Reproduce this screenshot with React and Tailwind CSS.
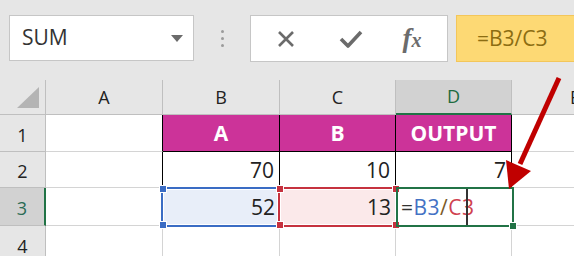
import React from "react";

const F = { fontFamily: '"Open Sans", "Noto Sans", sans-serif' };

function Corners({ color, skip = [] }) {
  const pos = {
    tl: "left-[-4px] top-[-4px]",
    tr: "right-[-4px] top-[-4px]",
    bl: "left-[-4px] bottom-[-4px]",
    br: "right-[-4px] bottom-[-4px]",
  };
  return (
    <>
      {["tl", "tr", "bl", "br"]
        .filter((k) => !skip.includes(k))
        .map((k) => (
          <div key={k} className={`absolute w-[8px] h-[8px] border border-white ${pos[k]} ${color}`} />
        ))}
    </>
  );
}

export default function App() {
  const gray = "border-[#d4d4d4]";
  return (
    <div className="relative w-[574px] h-[256px] overflow-hidden bg-white" style={F}>
      {/* top bar */}
      <div className="h-[80px] bg-[#e6e6e6] flex items-start pt-[15px] pl-[9px]">
        <div className="w-[185px] h-[46px] bg-white border border-[#c6c6c6] flex items-center justify-between pl-[12px] pr-[10px]">
          <span className="text-[21px] text-[#333]">SUM</span>
          <svg width="12" height="7" viewBox="0 0 12 7">
            <polygon points="0,0 12,0 6,7" fill="#6b6b6b" />
          </svg>
        </div>
        <div className="w-[56px] h-[46px] flex flex-col items-center justify-center gap-[4px]">
          <div className="w-[3px] h-[3px] rounded-full bg-[#9b9b9b]" />
          <div className="w-[3px] h-[3px] rounded-full bg-[#9b9b9b]" />
          <div className="w-[3px] h-[3px] rounded-full bg-[#9b9b9b]" />
        </div>
        <div className="w-[198px] h-[47px] bg-white border border-[#c6c6c6] flex items-center">
          <div className="w-[70px] flex justify-center">
            <svg width="18" height="18" viewBox="0 0 18 18">
              <path d="M2 2 L16 16 M16 2 L2 16" stroke="#6b6b6b" strokeWidth="2.6" />
            </svg>
          </div>
          <div className="w-[60px] flex justify-center">
            <svg width="24" height="18" viewBox="0 0 24 18">
              <path d="M2 9 L9 16 L22 2" stroke="#6b6b6b" strokeWidth="3.6" fill="none" strokeLinejoin="round" />
            </svg>
          </div>
          <div className="flex-1 flex justify-center pr-[4px]">
            <span className="italic font-bold text-[#6b6b6b] text-[27px] leading-none" style={{ fontFamily: '"Liberation Serif", serif' }}>
              f<span className="text-[20px]">x</span>
            </span>
          </div>
        </div>
        <div className="ml-[8px] flex-1 h-[47px] bg-[#fdd974] border border-[#f3c65a] border-r-0 flex items-center pl-[20px]">
          <span className="text-[21px] text-[#8c6d12]">=B3/C3</span>
        </div>
      </div>

      {/* grid */}
      <div className="grid grid-cols-[46px_117px_117px_116px_116px_1fr] grid-rows-[35px_37px_36px_38px_37px]">
        {/* header row */}
        <div className="bg-[#e6e6e6] border-r border-b border-[#bfbfbf] flex items-end justify-end pr-[6px] pb-[6px]">
          <svg width="22" height="21" viewBox="0 0 22 21">
            <polygon points="22,0 22,21 0,21" fill="#b4b4b4" />
          </svg>
        </div>
        {["A", "B", "C"].map((c) => (
          <div key={c} className="bg-[#e6e6e6] border-r border-b border-[#bfbfbf] flex items-center justify-center text-[18px] text-[#222]">
            {c}
          </div>
        ))}
        <div className="bg-[#d2d2d2] border-r border-[#bfbfbf] border-b-2 border-b-[#217346] flex items-center justify-center text-[18px] text-[#1e6b40]">
          D
        </div>
        <div className="bg-[#e6e6e6] border-b border-[#bfbfbf] flex items-center pl-[58px] text-[18px] text-[#222]">
          E
        </div>

        {/* row 1 */}
        <div className="bg-[#e6e6e6] border-r border-b border-[#bfbfbf] flex items-center justify-center pt-[4px] text-[18px] text-[#222]">1</div>
        <div className={`border-r border-r-black border-b ${gray}`} />
        <div className="bg-[#cc3399] border-r border-b border-black flex items-center justify-center pt-[2px] text-[21px] font-bold text-white">A</div>
        <div className="bg-[#cc3399] border-r border-b border-black flex items-center justify-center pt-[2px] text-[21px] font-bold text-white">B</div>
        <div className="bg-[#cc3399] border-r border-b border-black flex items-center justify-center pt-[2px] text-[21px] font-bold text-white">OUTPUT</div>
        <div className={`border-b ${gray}`} />

        {/* row 2 */}
        <div className="bg-[#e6e6e6] border-r border-b border-[#bfbfbf] flex items-center justify-center pt-[4px] text-[18px] text-[#222]">2</div>
        <div className={`border-r border-r-black border-b ${gray}`} />
        <div className="border-r border-b border-black flex items-end justify-end pr-[5px] pb-[1px] text-[21px] text-[#222]">70</div>
        <div className="border-r border-b border-black flex items-end justify-end pr-[5px] pb-[1px] text-[21px] text-[#222]">10</div>
        <div className="border-r border-b border-black flex items-end justify-end pr-[5px] pb-[1px] text-[21px] text-[#222]">7</div>
        <div className={`border-b ${gray}`} />

        {/* row 3 */}
        <div className="bg-[#d2d2d2] border-r-2 border-r-[#217346] border-b border-b-[#bfbfbf] flex items-center justify-center pt-[4px] text-[18px] text-[#2a6b55]">3</div>
        <div className={`border-r border-b ${gray}`} />
        <div className="flex items-end justify-end pr-[5px] pb-[3px] text-[21px] text-[#222]">52</div>
        <div className="flex items-end justify-end pr-[5px] pb-[3px] text-[21px] text-[#222]">13</div>
        <div className="flex items-end pl-[5px] pb-[3px] text-[21px] tracking-[0.5px]">
          <span className="text-[#333]">=</span>
          <span className="text-[#4472c4]">B3</span>
          <span className="text-[#7a5a2a]">/</span>
          <span className="text-[#d0414f]">C3</span>
        </div>
        <div className={`border-b ${gray}`} />

        {/* row 4 */}
        <div className="bg-[#e6e6e6] border-r border-[#bfbfbf] flex items-center justify-center pt-[4px] text-[18px] text-[#222]">4</div>
        <div className={`border-r ${gray}`} />
        <div className={`border-r ${gray}`} />
        <div className={`border-r ${gray}`} />
        <div className={`border-r ${gray}`} />
        <div />
      </div>

      {/* selection overlays */}
      <div className="absolute left-[161px] top-[187px] w-[119px] h-[40px] border-[2.5px] border-[#3a6cc4]">
        <div className="absolute inset-[1px] bg-[#e8eef9]" />
        <Corners color="bg-[#3a6cc4]" skip={["tr", "br"]} />
      </div>
      <div className="absolute left-[278px] top-[187px] w-[120px] h-[40px] border-[2.5px] border-[#c6323f]">
        <div className="absolute inset-[1px] bg-[#fbe9ea]" />
        <Corners color="bg-[#c6323f]" />
      </div>
      {/* values over the fills */}
      <div className="absolute left-[163px] top-[188px] w-[117px] h-[38px] flex items-end justify-end pr-[5px] pb-[3px] text-[21px] text-[#222]">52</div>
      <div className="absolute left-[280px] top-[188px] w-[116px] h-[38px] flex items-end justify-end pr-[5px] pb-[3px] text-[21px] text-[#222]">13</div>
      <div className="absolute left-[396px] top-[187px] w-[118px] h-[40px] border-[2.5px] border-[#217346]">
        <div className="absolute right-[-5px] bottom-[-5px] w-[8px] h-[8px] bg-[#217346] border border-white" />
      </div>
      <div className="absolute left-[466px] top-[189px] w-[2px] h-[36px] bg-[#333]" />

      {/* arrow */}
      <svg className="absolute left-0 top-0 pointer-events-none" width="574" height="256" viewBox="0 0 574 256">
        <line x1="559" y1="78" x2="520" y2="164" stroke="#c00000" strokeWidth="5" />
        <polygon points="509,189 506,160 531,171" fill="#c00000" />
      </svg>
    </div>
  );
}
